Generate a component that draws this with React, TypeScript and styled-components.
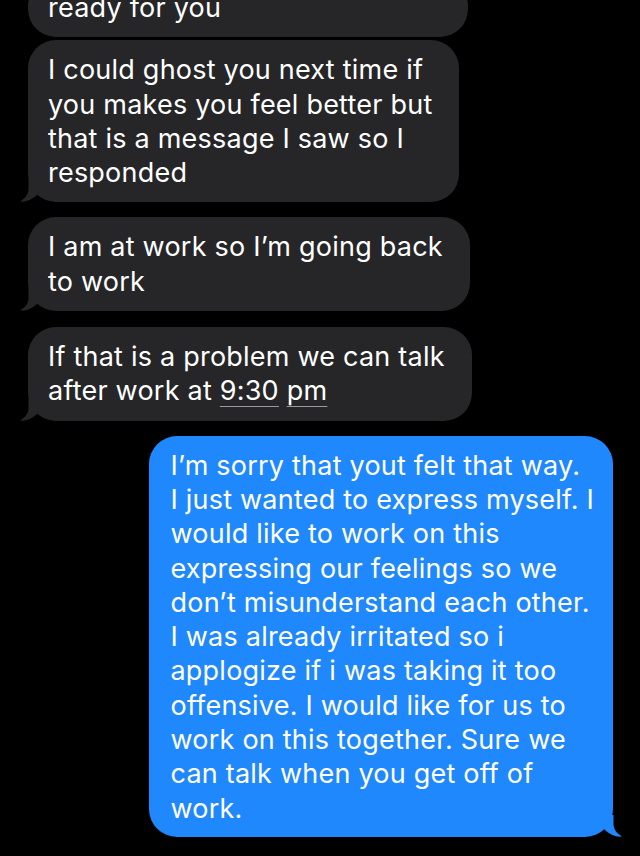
import styled, { createGlobalStyle } from 'styled-components';

const GlobalStyle = createGlobalStyle`
  html, body {
    margin: 0;
    padding: 0;
    background: #000;
  }
  body {
    width: 640px;
    height: 856px;
    overflow: hidden;
    font-family: Inter, "Noto Sans", "Liberation Sans", sans-serif;
    -webkit-font-smoothing: antialiased;
  }
`;

const StThread = styled.div`
  display: flex;
  flex-direction: column;
  padding: 0 27px 0 28px;
  margin-top: -22px;
`;

const StRow = styled.div<{ $out?: boolean; $gap: number }>`
  display: flex;
  justify-content: ${(p) => (p.$out ? 'flex-end' : 'flex-start')};
  margin-top: ${(p) => p.$gap}px;
`;

const StBubble = styled.div<{ $out?: boolean; $minWidth?: number }>`
  position: relative;
  box-sizing: border-box;
  min-width: ${(p) => p.$minWidth ?? 0}px;
  background: ${(p) => (p.$out ? '#1f88fc' : '#262628')};
  color: #fff;
  border-radius: 28px;
  padding: ${(p) => (p.$out ? '13px 19px 11px 21px' : '13px 27px 12px 20px')};
  font-size: 27px;
  line-height: 34.3px;
  letter-spacing: 0.22px;

  .line {
    display: block;
    white-space: nowrap;
  }

  .link {
    text-decoration: underline;
    text-decoration-color: #9a9a9e;
    text-decoration-thickness: 1px;
    text-underline-offset: 6px;
  }
`;

const StTail = styled.svg<{ $out?: boolean }>`
  position: absolute;
  bottom: 0;
  width: 30px;
  height: 22px;
  ${(p) => (p.$out ? 'right: -9px; transform: scaleX(-1);' : 'left: -8px;')}
`;

const Tail = ({ out, color }: { out?: boolean; color: string }) => (
  <StTail $out={out} viewBox="0 0 30 22">
    <path
      d="M8.5 0 L8.5 9 C8.5 14.5 5 18.5 0 21.5 C6 22.2 11.5 20 16.5 15.5 L30 0 Z"
      fill={color}
    />
  </StTail>
);

type Msg = {
  out?: boolean;
  tail?: boolean;
  gap: number;
  minWidth?: number;
  lines: React.ReactNode[];
};

const messages: Msg[] = [
  { gap: 0, minWidth: 440, lines: ['ready for you'] },
  {
    gap: 3,
    tail: true,
    lines: [
      'I could ghost you next time if',
      'you makes you feel better but',
      'that is a message I saw so I',
      'responded',
    ],
  },
  {
    gap: 15,
    tail: true,
    lines: ['I am at work so I\u2019m going back', 'to work'],
  },
  {
    gap: 16,
    tail: true,
    lines: [
      'If that is a problem we can talk',
      <>
        after work at <span className="link">9:30</span>{' '}
        <span className="link">pm</span>
      </>,
    ],
  },
  {
    gap: 15,
    out: true,
    tail: true,
    lines: [
      'I\u2019m sorry that yout felt that way.',
      'I just wanted to express myself. I',
      'would like to work on this',
      'expressing our feelings so we',
      'don\u2019t misunderstand each other.',
      'I was already irritated so i',
      'applogize if i was taking it too',
      'offensive. I would like for us to',
      'work on this together. Sure we',
      'can talk when you get off of',
      'work.',
    ],
  },
];

export default function App() {
  return (
    <>
      <GlobalStyle />
      <StThread>
        {messages.map((m, i) => (
          <StRow key={i} $out={m.out} $gap={m.gap}>
            <StBubble $out={m.out} $minWidth={m.minWidth}>
              {m.lines.map((l, j) => (
                <span className="line" key={j}>
                  {l}
                </span>
              ))}
              {m.tail && <Tail out={m.out} color={m.out ? '#1f88fc' : '#262628'} />}
            </StBubble>
          </StRow>
        ))}
      </StThread>
    </>
  );
}
